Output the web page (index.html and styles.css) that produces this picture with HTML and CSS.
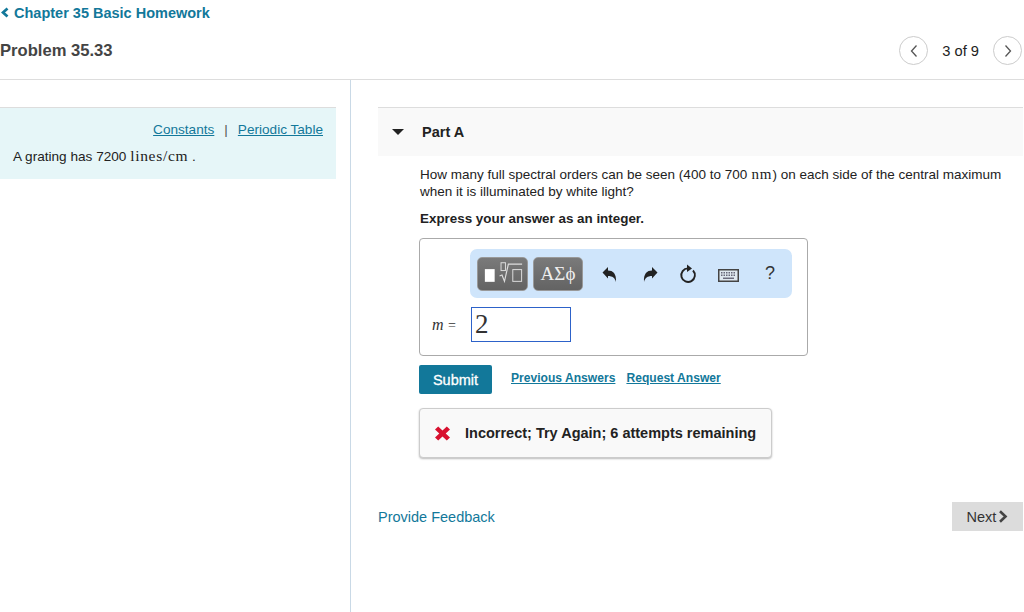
FILE: index.html
```html
<!DOCTYPE html>
<html lang="en">
<head>
<meta charset="utf-8">
<title>Problem 35.33</title>
<link rel="stylesheet" href="styles.css">
</head>
<body>
<header class="top">
  <a class="back" href="#"><svg class="back-icon" viewBox="0 0 8 10" width="8" height="11"><path d="M6.500 1 2 5l4.500 4" fill="none" stroke="#12789a" stroke-width="2.800"/></svg>Chapter 35 Basic Homework</a>
  <div class="title-row">
    <h1 class="title">Problem 35.33</h1>
    <nav class="pager">
      <span class="circle"><svg viewBox="0 0 10 14" width="10" height="14"><path d="M7.500 1.500 2.500 7l5 5.500" fill="none" stroke="#555" stroke-width="1.300"/></svg></span>
      <span class="count">3 of 9</span>
      <span class="circle"><svg viewBox="0 0 10 14" width="10" height="14"><path d="M2.500 1.500 7.500 7l-5 5.500" fill="none" stroke="#555" stroke-width="1.300"/></svg></span>
    </nav>
  </div>
</header>
<main class="main">
  <aside class="left">
    <section class="intro">
      <div class="intro-links"><a href="#">Constants</a><span class="sep">|</span><a href="#">Periodic Table</a></div>
      <p class="intro-text">A grating has 7200 <span class="math">lines/cm</span> .</p>
    </section>
  </aside>
  <section class="right">
    <div class="part-head"><svg class="caret" viewBox="0 0 12 6" width="12" height="6"><path d="M0 0h12L6 6z" fill="#222"/></svg><span>Part A</span></div>
    <div class="part-body">
      <p class="question"><span class="line">How many full spectral orders can be seen (400 to 700 <span class="math">nm</span>) on each side of the central maximum</span><span class="line">when it is illuminated by white light?</span></p>
      <p class="express">Express your answer as an integer.</p>
      <div class="answer-box">
        <div class="toolbar">
          <span class="tool-btn tool-templates">
            <svg viewBox="0 0 50 34" width="50" height="34">
              <rect x="7" y="12" width="10" height="13" fill="#fff"/>
              <rect x="23.500" y="5.500" width="4.500" height="8" fill="none" stroke="#ddd" stroke-width="1"/>
              <path d="M22 19l2.500-1 2.500 6.500L31 7h14" fill="none" stroke="#ddd" stroke-width="1.200"/>
              <rect x="35.500" y="12.500" width="9" height="12" fill="none" stroke="#ddd" stroke-width="1"/>
            </svg>
          </span>
          <span class="tool-btn tool-greek">ΑΣϕ</span>
          <span class="tool-icons">
            <svg viewBox="0 0 16 16" width="16" height="16"><path d="M.5 6.500 6 1v3.500c5 0 8.500 3 8 11.500C13 12 10.500 10 6 10v2.500z" fill="#222"/></svg>
            <svg class="icon-redo" viewBox="0 0 16 16" width="16" height="16"><path d="M15.500 6.500 10 1v3.500c-5 0-8.500 3-8 11.500C3 12 5.500 10 10 10v2.500z" fill="#222"/></svg>
            <svg viewBox="0 0 18 20" width="18" height="20"><path d="M9 4.400A6.800 6.800 0 1 0 14 6.500" fill="none" stroke="#222" stroke-width="1.900"/><path d="M8 .5l5 4-5 3.500z" fill="#222"/></svg>
            <svg class="icon-keys" viewBox="0 0 21 13" width="21" height="13"><rect x=".75" y=".75" width="19.500" height="11.500" fill="#dfe8ef" stroke="#444" stroke-width="1.500"/><path d="M3 3.750h15M3 6.250h15" stroke="#667" stroke-width="1.400" stroke-dasharray="1.500 1"/><path d="M5 9.250h11" stroke="#667" stroke-width="1.400"/></svg>
            <span class="help">?</span>
          </span>
        </div>
        <div class="input-row">
          <span class="var"><i class="var-m">m</i> =</span>
          <span class="input">2</span>
        </div>
      </div>
      <div class="actions">
        <a class="submit" href="#">Submit</a>
        <a class="action-link" href="#">Previous Answers</a>
        <a class="action-link" href="#">Request Answer</a>
      </div>
      <div class="feedback">
        <svg viewBox="0 0 14 14" width="15" height="15"><path d="M3 .5 7 4.300 11 .5 14 3.200 10 7l4 3.800-3 2.700L7 9.700 3 13.500 0 10.800 4 7 0 3.200z" fill="#d8112f"/></svg>
        <span>Incorrect; Try Again; 6 attempts remaining</span>
      </div>
    </div>
    <div class="bottom">
      <a class="provide" href="#">Provide Feedback</a>
      <a class="next" href="#">Next<svg viewBox="0 0 10 13" width="10" height="13"><path d="M2 1.300 7.500 6.500 2 11.700" fill="none" stroke="#444" stroke-width="2.600"/></svg></a>
    </div>
  </section>
</main>
</body>
</html>
```
FILE: styles.css
```css
* { box-sizing: border-box; }
html, body { margin: 0; padding: 0; }
body {
  width: 1024px;
  height: 612px;
  overflow: hidden;
  background: #fff;
  font-family: "Liberation Sans", Arial, sans-serif;
  color: #222;
  display: flex;
  flex-direction: column;
}
a { color: #12789a; }
p { margin: 0; }
.math { font-family: "Liberation Serif", serif; }

.top {
  height: 80px;
  border-bottom: 1px solid #ddd;
  flex: none;
}
.back {
  display: flex;
  align-items: center;
  gap: 5px;
  height: 25px;
  padding-left: 1px;
  font-size: 14.5px;
  font-weight: 700;
  text-decoration: none;
}
.title-row {
  display: flex;
  justify-content: space-between;
  align-items: center;
  height: 51px;
}
.title {
  margin: 0;
  font-size: 16.6px;
  font-weight: 700;
  color: #444;
}
.pager {
  display: flex;
  align-items: center;
  gap: 14px;
  padding-right: 2px;
  font-size: 14.7px;
}
.circle {
  width: 29px;
  height: 29px;
  border: 1px solid #ccc;
  border-radius: 50%;
  display: flex;
  align-items: center;
  justify-content: center;
}

.main {
  flex: 1;
  display: flex;
  min-height: 0;
}
.left {
  width: 351px;
  flex: none;
  padding-top: 27px;
  border-right: 1px solid #c9d9e6;
}
.intro {
  width: 336px;
  height: 72px;
  background: #e6f6f8;
  border-top: 1px solid #ddd;
  padding: 14px 13px 0;
  font-size: 13.6px;
}
.intro-links {
  display: flex;
  justify-content: flex-end;
  gap: 10px;
  line-height: 16px;
}
.sep { color: #555; }
.intro-text { margin-top: 10px; line-height: 16px; }
.intro-text .math { font-size: 15.5px; letter-spacing: 0.7px; }

.right {
  flex: 1;
  padding: 27px 1px 0 27px;
  display: flex;
  flex-direction: column;
}
.part-head {
  height: 49px;
  background: #f9f9f9;
  border-top: 1px solid #ddd;
  display: flex;
  align-items: center;
  gap: 18px;
  padding-left: 14px;
  font-size: 14.5px;
  font-weight: 700;
}
.part-body { padding-left: 41px; }
.question {
  margin-top: 10px;
  padding-left: 1px;
  font-size: 13.5px;
  line-height: 17px;
}
.line { display: block; height: 17px; white-space: nowrap; }
.question .math { font-size: 15px; letter-spacing: 0.7px; margin: 0 0.5px; line-height: 1; }
.express {
  margin-top: 10px;
  padding-left: 1px;
  font-size: 13.4px;
  font-weight: 700;
  line-height: 17px;
}
.answer-box {
  margin-top: 11px;
  width: 389px;
  height: 118px;
  border: 1px solid #aaa;
  border-radius: 4px;
  padding: 10px 15px 0 50px;
}
.toolbar {
  height: 49px;
  background: #cfe5fb;
  border-radius: 7px;
  display: flex;
  align-items: center;
  padding-left: 7px;
  gap: 5px;
}
.tool-btn {
  height: 34px;
  border-radius: 5px;
  background: linear-gradient(#7a7a7a, #636363);
  border: 1px solid #999;
  display: flex;
  align-items: center;
  justify-content: center;
  width: 51px;
  color: #eee;
}
.tool-greek {
  width: 50px;
  font-family: "Liberation Serif", "DejaVu Serif", serif;
  font-size: 19px;
}
.tool-icons {
  display: flex;
  align-items: center;
  gap: 21px;
  padding-left: 14px;
}
.icon-redo { margin-left: 3px; }
.icon-keys { margin-top: 4px; }
.help { font-size: 18px; color: #333; margin-left: 5px; }
.input-row {
  display: flex;
  align-items: center;
  gap: 12px;
  margin-top: 9px;
  margin-left: -38px;
}
.var { font-size: 14px; font-family: "Liberation Serif", serif; color: #333; width: 27px; white-space: nowrap; }
.var-m { font-size: 16px; letter-spacing: 1px; }
.input {
  width: 100px;
  height: 35px;
  border: 1px solid #2d62c9;
  font-family: "Liberation Serif", serif;
  font-size: 27px;
  line-height: 33px;
  padding-left: 3px;
  color: #333;
}
.actions {
  margin-top: 9px;
  display: flex;
  align-items: flex-start;
  gap: 11px;
  font-size: 12.1px;
  font-weight: 700;
}
.submit {
  width: 73px;
  height: 29px;
  background: #12789a;
  color: #fff;
  border-radius: 2px;
  text-decoration: none;
  font-size: 14.5px;
  font-weight: 400;
  -webkit-text-stroke: 0.3px #fff;
  display: flex;
  align-items: center;
  justify-content: center;
  margin-right: 8px;
}
.action-link { line-height: 16px; margin-top: 5px; }
.feedback {
  margin-top: 14px;
  width: 353px;
  height: 50px;
  background: #f9f9f9;
  border: 1px solid #ccc;
  border-radius: 4px;
  box-shadow: 0 1px 2px #bbb;
  display: flex;
  align-items: center;
  gap: 15px;
  padding-left: 15px;
  font-size: 14.5px;
  font-weight: 700;
}
.bottom {
  margin-top: 44px;
  display: flex;
  justify-content: space-between;
  align-items: center;
  font-size: 14.5px;
}
.provide { text-decoration: none; }
.next {
  width: 71px;
  height: 29px;
  background: #dcdcdc;
  color: #333;
  text-decoration: none;
  display: flex;
  align-items: center;
  justify-content: center;
  gap: 2px;
}
```
